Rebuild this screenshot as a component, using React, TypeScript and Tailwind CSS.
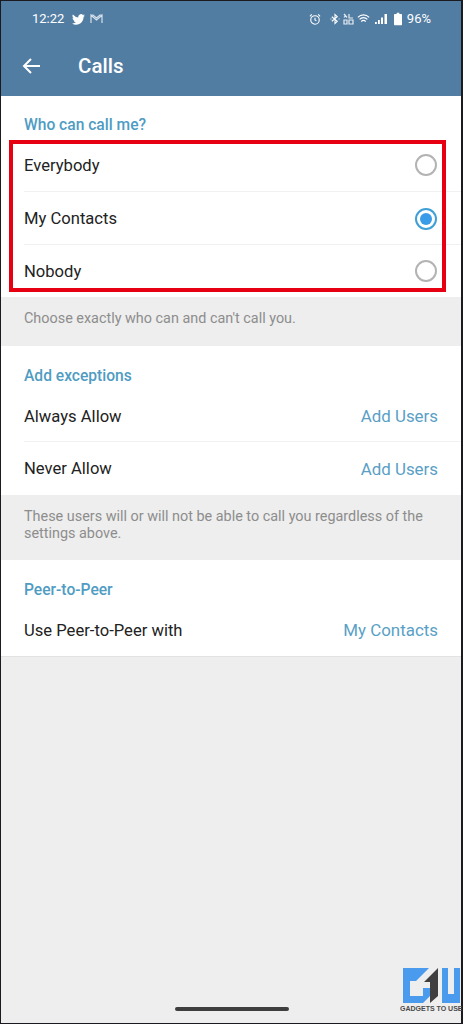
import React from "react";

const font = { fontFamily: "Roboto, sans-serif" };

function Radio({ checked }: { checked?: boolean }) {
  return checked ? (
    <div className="mr-[1px] w-[22px] h-[22px] rounded-full border-2 border-[#3f9fd8] flex items-center justify-center">
      <div className="w-[12px] h-[12px] rounded-full bg-[#3a9be8]" />
    </div>
  ) : (
    <div className="mr-[1px] w-[22px] h-[22px] rounded-full border-2 border-[#b3b3b3]" />
  );
}

function Row({ label, right, radio, checked, last, h }: { label: string; right?: string; radio?: boolean; checked?: boolean; last?: boolean; h: string }) {
  return (
    <div className={`relative flex items-center justify-between pl-[23px] pr-[23px] ${h}`}>
      <span className="mt-[2px] text-[16.6px] text-[#222222]">{label}</span>
      {right && <span className="mt-[2px] text-[16.9px] text-[#5a9fc6]">{right}</span>}
      {radio && <Radio checked={checked} />}
      {!last && <div className="absolute left-[23px] right-0 bottom-0 h-px bg-[#f1f1f1]" />}
    </div>
  );
}

function Label({ children, h }: { children: string; h: string }) {
  return <div className={`pl-[23px] h-[38px] text-[15.6px] leading-[16px] font-medium text-[#4f9cc3] ${h}`}>{children}</div>;
}

function Note({ children, h }: { children: React.ReactNode; h: string }) {
  return <div className={`bg-[#eeeeee] pl-[23px] pr-[20px] text-[14.4px] leading-[17px] text-[#8d8d8d] ${h}`}>{children}</div>;
}

function Logo() {
  return (
    <div className="absolute left-[400px] top-[968px] w-[62px] flex flex-col items-start">
      <svg className="ml-[3px]" width="57" height="35" viewBox="0 0 57 35">
        <path d="M0 0H26L13 13H7V28H20V20H27V28L20 35H0Z" fill="#4a9bee" />
        <path d="M35 0V28L27 35V14H21Z" fill="#3f3f3f" />
        <path d="M39 0H45V26H51V0H57V35H39Z" fill="#4a9bee" />
      </svg>
      <span className="mt-[1px] text-[7px] leading-[9px] font-bold text-[#4a4a4a] whitespace-nowrap" style={{ fontFamily: "'Liberation Sans', sans-serif" }}>GADGETS TO USE</span>
    </div>
  );
}

function StatusBar() {
  return (
    <div className="h-[36px] flex items-center justify-between pl-[31px] pr-[30px] text-white text-[13px]">
      <div className="flex items-center gap-[8px]">
        <span>12:22</span>
        <svg width="13" height="11" viewBox="0 0 24 20" fill="#fff"><path d="M24 2.4a9.8 9.8 0 0 1-2.8.8A4.9 4.9 0 0 0 23.3.5a9.8 9.8 0 0 1-3.1 1.2 4.9 4.9 0 0 0-8.4 4.5A14 14 0 0 1 1.7.9a4.9 4.9 0 0 0 1.5 6.6 4.9 4.9 0 0 1-2.2-.6 4.9 4.9 0 0 0 3.9 4.9 4.9 4.9 0 0 1-2.2.1 4.9 4.9 0 0 0 4.6 3.4A9.9 9.9 0 0 1 0 17.3 14 14 0 0 0 7.5 19.5c9.1 0 14.2-7.7 13.9-14.6A9.9 9.9 0 0 0 24 2.4z" /></svg>
        <svg className="-ml-[3px]" width="13" height="10" viewBox="0 0 13 10" fill="none" stroke="#d5e0ea" strokeWidth="1.2"><path d="M1 9V1.2L6.5 6 12 1.2V9M1 1H3L6.5 4 10 1H12" /></svg>
      </div>
      <div className="flex items-center">
        <svg width="12" height="13" viewBox="0 0 13 13" fill="none" stroke="#fff" strokeWidth="1.2"><circle cx="6.5" cy="7" r="4.6" /><path d="M6.5 4.5V7L8 8M1 3L3 1M12 3L10 1" /></svg>
        <svg className="ml-[9px]" width="10" height="12" viewBox="0 0 11 12" fill="none" stroke="#fff" strokeWidth="1.2"><path d="M2 3.5L8 8.5L5.5 11V1L8 3.5L2 8.5" /><path d="M0.5 6H1.5M9.5 6H10.5" /></svg>
        <svg className="ml-[3px]" width="11" height="12" viewBox="0 0 11 12" fill="none" stroke="#e6edf3" strokeWidth="1.2"><path d="M1 1L4 4.5M1 4.5L3 2M6 1V5H10M6 7H10V11H6ZM1 7H4V11H1Z" /></svg>
        <svg className="ml-[3px]" width="13" height="12" viewBox="0 0 15 12" fill="none" stroke="#fff" strokeWidth="1.3"><path d="M1 4a9 9 0 0 1 13 0M3 6.5a6 6 0 0 1 9 0M5 9a3 3 0 0 1 5 0" /></svg>
        <svg className="ml-[5px]" width="13" height="12" viewBox="0 0 13 12" fill="#fff"><rect x="0" y="9" width="1.8" height="2" /><rect x="3" y="7" width="1.8" height="4" /><rect x="6" y="4.5" width="2" height="6.5" /><rect x="9.5" y="1" width="2.5" height="10" /></svg>
        <svg className="ml-[6px]" width="8" height="14" viewBox="0 0 9 14" fill="#fff"><path d="M3 0H6V1.5H8.2A.8.8 0 0 1 9 2.3V13.2A.8.8 0 0 1 8.2 14H.8A.8.8 0 0 1 0 13.2V2.3A.8.8 0 0 1 .8 1.5H3Z" /></svg>
        <span className="ml-[5px]">96%</span>
      </div>
    </div>
  );
}

export default function App() {
  return (
    <div className="relative w-[463px] h-[1024px] overflow-hidden bg-[#1b1b1f] pl-px pr-[2px] pt-[1px] pb-[1px]" style={font}>
      <div className="relative h-full bg-[#eeeeee] flex flex-col">
        <div className="h-[95px] bg-[#527da3] shrink-0">
          <StatusBar />
          <div className="h-[57px] flex items-center pl-[21px]">
            <svg width="18" height="16" viewBox="0 0 18 16" fill="none" stroke="#fff" strokeWidth="2"><path d="M18 8H2M9 1L2 8L9 15" /></svg>
            <span className="ml-[38px] mt-[2px] text-[20.5px] font-medium text-white leading-none">Calls</span>
          </div>
        </div>
        <div className="bg-white shrink-0 shadow-[0_1px_0_#e2e2e2]">
          <Label h="pt-[21px]">Who can call me?</Label>
          <Row h="h-[58px] pt-[4px]" label="Everybody" radio />
          <Row h="h-[53px]" label="My Contacts" radio checked />
          <Row h="h-[52px]" label="Nobody" radio last />
        </div>
        <Note h="h-[49px] pt-[13px] shrink-0">Choose exactly who can and can&apos;t call you.</Note>
        <div className="bg-white shrink-0">
          <Label h="pt-[22px]">Add exceptions</Label>
          <Row h="h-[58px] pt-[6px]" label="Always Allow" right="Add Users" />
          <Row h="h-[53px]" label="Never Allow" right="Add Users" last />
        </div>
        <Note h="h-[65px] pt-[13px] shrink-0">These users will or will not be able to call you regardless of the settings above.</Note>
        <div className="bg-white shrink-0 shadow-[0_1px_0_#e2e2e2]">
          <Label h="pt-[22px]">Peer-to-Peer</Label>
          <Row h="h-[58px] pt-[6px]" label="Use Peer-to-Peer with" right="My Contacts" last />
        </div>
        <div className="absolute left-[174px] top-[1006px] w-[114px] h-[4px] rounded-full bg-[#3e3e3e]" />
      </div>
      <div className="absolute left-[9px] top-[140px] w-[437px] h-[152px] border-[4px] border-[#e60012]" />
      <Logo />
    </div>
  );
}
